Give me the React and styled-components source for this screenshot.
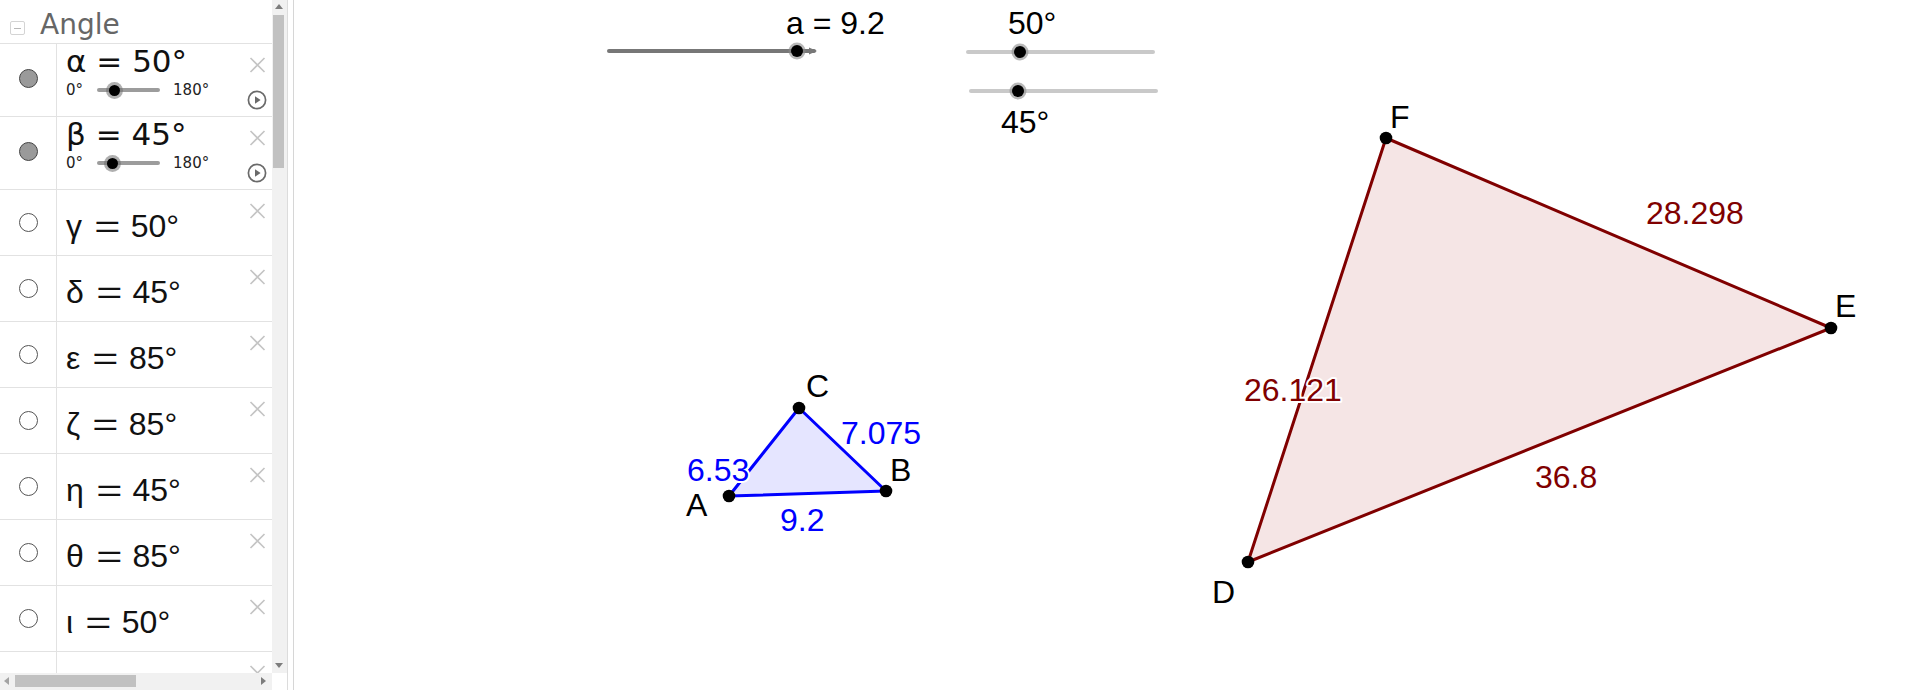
import React from "react";
import styled, { createGlobalStyle } from "styled-components";

const GlobalStyle = createGlobalStyle`
  html, body {
    margin: 0;
    padding: 0;
    background: #fff;
    overflow: hidden;
  }
  body {
    font-family: "DejaVu Sans", sans-serif;
  }
`;

const angles = [
  { sym: "α", val: 50, slider: true },
  { sym: "β", val: 45, slider: true },
  { sym: "γ", val: 50 },
  { sym: "δ", val: 45 },
  { sym: "ε", val: 85 },
  { sym: "ζ", val: 85 },
  { sym: "η", val: 45 },
  { sym: "θ", val: 85 },
  { sym: "ι", val: 50 },
];

const Page = styled.div`
  display: flex;
  width: 1906px;
  height: 690px;
  background: #fff;
`;

const Panel = styled.div`
  display: flex;
  flex: none;
  width: 294px;
  height: 690px;
  border-right: 1px solid #d6d6d6;
  box-sizing: border-box;
`;

const ListColumn = styled.div`
  display: flex;
  flex-direction: column;
  width: 272px;
`;

const List = styled.div`
  height: 673px;
  overflow: hidden;
`;

const Header = styled.div`
  display: flex;
  align-items: center;
  height: 44px;
  padding-top: 6px;
  box-sizing: border-box;
  border-bottom: 1px solid #e2e2e2;
`;

const Collapse = styled.div`
  width: 13px;
  height: 12px;
  margin: 7px 15px 0 10px;
  border: 1px solid #d4d4d4;
  border-radius: 2px;
  display: flex;
  align-items: center;
  justify-content: center;

  &::after {
    content: "";
    width: 7px;
    height: 1px;
    background: #b8b8b8;
  }
`;

const HeaderTitle = styled.span`
  font-family: "DejaVu Sans", sans-serif;
  font-size: 28px;
  line-height: 32px;
  color: #666;
`;

const Row = styled.div`
  display: grid;
  grid-template-columns: 57px 1fr 30px;
  height: ${(p) => p.$h}px;
  border-bottom: 1px solid #e2e2e2;
  box-sizing: border-box;
`;

const ToggleCell = styled.div`
  display: flex;
  justify-content: center;
  padding-top: ${(p) => p.$pt}px;
  border-right: 1px solid #e2e2e2;
`;

const Dot = styled.div`
  width: 19px;
  height: 19px;
  border-radius: 50%;
  box-sizing: border-box;
  border: 1px solid ${(p) => (p.$filled ? "#444" : "#555")};
  background: ${(p) => (p.$filled ? "#9a9a9a" : "#fff")};
`;

const SliderContent = styled.div`
  display: flex;
  flex-direction: column;
  padding-left: 9px;
`;

const SliderTitle = styled.div`
  font-family: "DejaVu Sans", sans-serif;
  font-size: 31px;
  line-height: 34px;
  color: #111;
  white-space: nowrap;
`;

const MiniRow = styled.div`
  display: flex;
  align-items: center;
  height: 24px;
  font-family: "DejaVu Sans", sans-serif;
  font-size: 15px;
  color: #222;
`;

const MiniTrack = styled.div`
  position: relative;
  width: 63px;
  height: 4px;
  margin: 0 13px 0 14px;
  border-radius: 2px;
  background: #9c9c9c;
`;

const MiniKnob = styled.div`
  position: absolute;
  top: 50%;
  width: 11px;
  height: 11px;
  margin: -5.5px 0 0 -5.5px;
  border-radius: 50%;
  background: #000;
  box-shadow: 0 0 0 3px rgba(110, 110, 110, 0.55);
`;

const PlainContent = styled.div`
  padding: 18px 0 0 9px;
  font-family: "Liberation Sans", Arial, sans-serif;
  font-size: 32px;
  line-height: 36px;
  color: #111;
  white-space: nowrap;
`;

const Eq = styled.span`
  display: inline-block;
  margin: 0 14px 0 16px;
  transform: scaleX(1.4);
`;

const Controls = styled.div`
  display: flex;
  flex-direction: column;
  align-items: center;
  padding-top: 13px;
  gap: 17px;
`;

const HScroll = styled.div`
  display: flex;
  align-items: center;
  height: 17px;
  background: #f1f1f1;
  position: relative;
`;

const HThumb = styled.div`
  position: absolute;
  left: 15px;
  top: 2px;
  width: 121px;
  height: 12px;
  background: #c1c1c1;
`;

const VScroll = styled.div`
  display: flex;
  flex-direction: column;
  width: 15px;
  border-right: 1px solid #dcdcdc;
`;

const VTrack = styled.div`
  position: relative;
  height: 673px;
  background: #f1f1f1;
`;

const VThumb = styled.div`
  position: absolute;
  left: 1px;
  top: 15px;
  width: 11px;
  height: 153px;
  background: #c1c1c1;
`;

const Arrow = styled.div`
  position: absolute;
  width: 0;
  height: 0;
  border-style: solid;
  ${(p) =>
    p.$dir === "up" &&
    `left: 3px; top: 4px; border-width: 0 4px 5px 4px; border-color: transparent transparent #7d7d7d transparent;`}
  ${(p) =>
    p.$dir === "down" &&
    `left: 3px; bottom: 5px; border-width: 5px 4px 0 4px; border-color: #7d7d7d transparent transparent transparent;`}
  ${(p) =>
    p.$dir === "left" &&
    `left: 4px; top: 4px; border-width: 4px 5px 4px 0; border-color: transparent #a3a3a3 transparent transparent;`}
  ${(p) =>
    p.$dir === "right" &&
    `right: 6px; top: 4px; border-width: 4px 0 4px 5px; border-color: transparent transparent transparent #7d7d7d;`}
`;

const Gutter = styled.div`
  width: 5px;
`;

const Canvas = styled.div`
  flex: 1;
  height: 690px;
  overflow: hidden;
`;

const CloseIcon = () => (
  <svg width="17" height="16" viewBox="0 0 17 16">
    <path d="M1.5 1 L15.5 15 M15.5 1 L1.5 15" stroke="#c4c4c4" strokeWidth="1.6" fill="none" />
  </svg>
);

const PlayIcon = () => (
  <svg width="20" height="20" viewBox="0 0 20 20">
    <circle cx="10" cy="10" r="8.6" stroke="#6a6a6a" strokeWidth="1.7" fill="#fff" />
    <path d="M8 6.2 L13.6 10 L8 13.8 Z" fill="#6a6a6a" />
  </svg>
);

const AngleRow = ({ sym, val, slider }) =>
  slider ? (
    <Row $h={73}>
      <ToggleCell $pt={25}>
        <Dot $filled />
      </ToggleCell>
      <SliderContent>
        <SliderTitle>
          {sym} = {val}°
        </SliderTitle>
        <MiniRow>
          <span>0°</span>
          <MiniTrack>
            <MiniKnob style={{ left: `${(val / 180) * 63}px` }} />
          </MiniTrack>
          <span>180°</span>
        </MiniRow>
      </SliderContent>
      <Controls>
        <CloseIcon />
        <PlayIcon />
      </Controls>
    </Row>
  ) : (
    <Row $h={66}>
      <ToggleCell $pt={23}>
        <Dot />
      </ToggleCell>
      <PlainContent>
        {sym}
        <Eq>=</Eq>
        {val}°
      </PlainContent>
      <Controls>
        <CloseIcon />
      </Controls>
    </Row>
  );

const labelFont = { fontFamily: '"Liberation Sans", Arial, sans-serif' };

const Label = ({ x, y, size = 32, fill = "#000", children }) => (
  <text
    x={x}
    y={y}
    fontSize={size}
    fill={fill}
    stroke="#fff"
    strokeWidth="4"
    strokeLinejoin="round"
    paintOrder="stroke"
    style={labelFont}
  >
    {children}
  </text>
);

const Knob = ({ cx, cy }) => (
  <g>
    <circle cx={cx} cy={cy} r="8.5" fill="#8a8a8a" opacity="0.6" />
    <circle cx={cx} cy={cy} r="6" fill="#000" />
  </g>
);

const Point = ({ cx, cy }) => <circle cx={cx} cy={cy} r="6.3" fill="#000" />;

const Drawing = () => (
  <svg width="1612" height="690" viewBox="294 0 1612 690">
    {/* slider a */}
    <line x1="609" y1="51" x2="814" y2="51" stroke="#777" strokeWidth="4" strokeLinecap="round" />
    <path d="M809 47.5 L817 51 L809 54.5 Z" fill="#777" />
    <Knob cx={797} cy={51} />
    <Label x={786} y={34}>a = 9.2</Label>

    {/* angle sliders */}
    <line x1="968" y1="52" x2="1153" y2="52" stroke="#c9c9c9" strokeWidth="4" strokeLinecap="round" />
    <Knob cx={1020} cy={52} />
    <Label x={1008} y={34}>50°</Label>

    <line x1="971" y1="91" x2="1156" y2="91" stroke="#c9c9c9" strokeWidth="4" strokeLinecap="round" />
    <Knob cx={1018} cy={91} />
    <Label x={1001} y={133}>45°</Label>

    {/* triangle ABC */}
    <polygon
      points="729,496 886,491 799,408"
      fill="rgba(0,0,255,0.1)"
      stroke="#0000ff"
      strokeWidth="3"
      strokeLinejoin="round"
    />
    <Label x={687} y={481} fill="#0000ff">6.53</Label>
    <Label x={841} y={444} fill="#0000ff">7.075</Label>
    <Label x={780} y={531} fill="#0000ff">9.2</Label>
    <Point cx={729} cy={496} />
    <Point cx={886} cy={491} />
    <Point cx={799} cy={408} />
    <Label x={686} y={516}>A</Label>
    <Label x={890} y={481}>B</Label>
    <Label x={806} y={397}>C</Label>

    {/* triangle DEF */}
    <polygon
      points="1248,562 1831,328 1386,138"
      fill="rgba(153,0,0,0.1)"
      stroke="#800000"
      strokeWidth="3"
      strokeLinejoin="round"
    />
    <Label x={1244} y={401} fill="#800000">26.121</Label>
    <Label x={1646} y={224} fill="#800000">28.298</Label>
    <Label x={1535} y={488} fill="#800000">36.8</Label>
    <Point cx={1248} cy={562} />
    <Point cx={1831} cy={328} />
    <Point cx={1386} cy={138} />
    <Label x={1390} y={128}>F</Label>
    <Label x={1835} y={317}>E</Label>
    <Label x={1212} y={603}>D</Label>
  </svg>
);

export default function App() {
  return (
    <>
      <GlobalStyle />
      <Page>
        <Panel>
          <ListColumn>
            <List>
              <Header>
                <Collapse />
                <HeaderTitle>Angle</HeaderTitle>
              </Header>
              {angles.map((a) => (
                <AngleRow key={a.sym} {...a} />
              ))}
              <Row $h={66}>
                <ToggleCell $pt={23} />
                <div />
                <Controls>
                  <CloseIcon />
                </Controls>
              </Row>
            </List>
            <HScroll>
              <Arrow $dir="left" />
              <HThumb />
              <Arrow $dir="right" />
            </HScroll>
          </ListColumn>
          <VScroll>
            <VTrack>
              <Arrow $dir="up" />
              <VThumb />
              <Arrow $dir="down" />
            </VTrack>
          </VScroll>
          <Gutter />
        </Panel>
        <Canvas>
          <Drawing />
        </Canvas>
      </Page>
    </>
  );
}
